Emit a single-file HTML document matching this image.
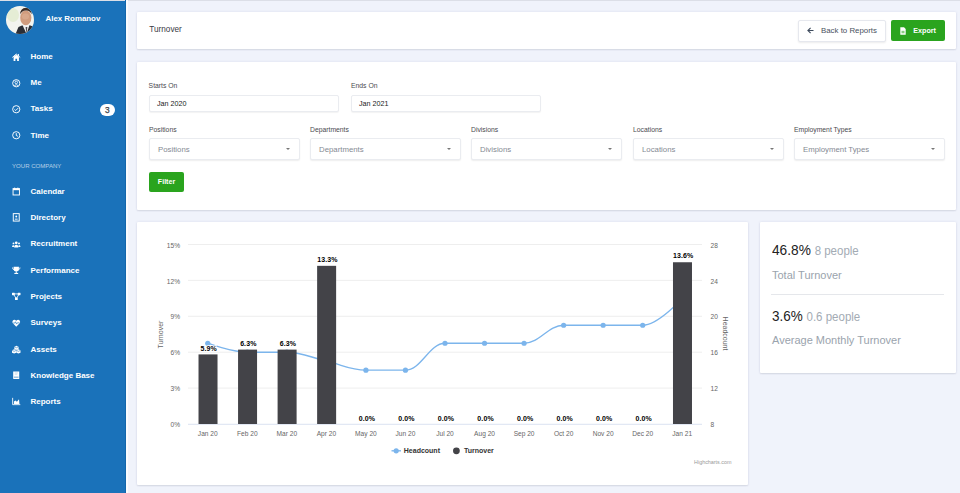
<!DOCTYPE html>
<html><head><meta charset="utf-8"><style>
*{box-sizing:border-box;margin:0;padding:0}
html,body{width:960px;height:493px;overflow:hidden;background:#f0f3fb;font-family:"Liberation Sans",sans-serif}
.abs{position:absolute}
#side{position:absolute;left:0;top:0;width:126px;height:493px;background:#1a72ba}
#topline{position:absolute;left:0;top:0;width:960px;height:1px;background:#dcdfe7}
.ic{position:absolute;left:11.8px;width:8.5px;height:8.5px;overflow:visible}
.mi{position:absolute;left:30.5px;color:#fff;font-weight:bold;font-size:8px;line-height:12px;white-space:nowrap}
.card{position:absolute;background:#fff;border-radius:1px;box-shadow:0 0 2.5px rgba(60,70,120,0.13),0 1px 1.5px rgba(40,45,70,0.1)}
.lbl{position:absolute;font-size:6.8px;color:#4a4a50;line-height:8px;white-space:nowrap}
.inp{position:absolute;height:17px;border:1px solid #eaecf0;border-radius:2px;box-shadow:0 1px 1px rgba(0,0,0,0.05);font-size:7.2px;color:#222;line-height:15px;padding-left:7px;background:#fff}
.sel{position:absolute;width:150.5px;height:22px;border:1px solid #eaecf0;border-radius:2px;box-shadow:0 1px 1.5px rgba(0,0,0,0.07);font-size:7.8px;color:#858a93;line-height:21px;padding-left:8px;background:#fff}
.car{position:absolute;right:9px;top:9px;width:0;height:0;border-left:2px solid transparent;border-right:2px solid transparent;border-top:2.3px solid #777}
.btn{position:absolute;border-radius:2px;white-space:nowrap}
svg text{font-family:"Liberation Sans",sans-serif}
.al{font-size:6.6px;fill:#666}
.at{font-size:7px;fill:#666}
.dl{font-size:7px;letter-spacing:0.1px;font-weight:bold;fill:#000;stroke:#fff;stroke-width:1.5px;paint-order:stroke}
.lg{font-size:7px;font-weight:bold;fill:#333}
.cr{font-size:5.4px;fill:#999}
</style></head><body>
<div id="side">
<svg class="abs" style="left:6px;top:6px" width="28" height="28" viewBox="0 0 28 28"><defs><clipPath id="av"><circle cx="14" cy="14" r="14"/></clipPath></defs><g clip-path="url(#av)">
<rect width="28" height="28" fill="#f3f4ef"/><ellipse cx="7" cy="9" rx="6" ry="7" fill="#e3ecd2" opacity="0.9"/>
<path d="M9.5 28 L12.5 21 Q16 19 19.5 18.8 Q24 19 27 20.5 L28 28Z" fill="#2b2e35"/>
<path d="M16.5 19 L20.5 28 L23.5 19 Z" fill="#f2f2f2"/><path d="M19.6 21 L20.4 28 L21.4 21Z" fill="#4a4a50"/>
<ellipse cx="19.8" cy="11.8" rx="5.6" ry="7.4" fill="#d09c7e"/><ellipse cx="19.5" cy="10.5" rx="3.5" ry="3" fill="#dcae92" opacity="0.7"/>
<path d="M14.2 8.5 Q14 2.2 20 1.8 Q25.8 2.2 25.6 8.5 Q24.8 4.6 20 4.4 Q15.2 4.6 14.2 8.5Z" fill="#3a2b25"/>
</g></svg>
<div class="abs" style="left:45.5px;top:14.2px;color:#fff;font-weight:bold;font-size:7.9px;line-height:10px;white-space:nowrap">Alex Romanov</div>
<svg class="ic" style="top:52.6px" viewBox="0 0 8 8"><path d="M0.3 4.2 L4 1 L7.7 4.2" fill="none" stroke="#fff" stroke-width="0.9"/><path d="M1.5 3.6 V7.5 H3.2 V5.3 H4.8 V7.5 H6.5 V3.6 L4 1.6 Z" fill="#fff"/><rect x="5.6" y="0.9" width="0.9" height="2" fill="#fff"/></svg><div class="mi" style="top:51.3px">Home</div>
<svg class="ic" style="top:78.5px" viewBox="0 0 8 8"><circle cx="4" cy="4" r="3.4" fill="none" stroke="#fff" stroke-width="0.9"/><circle cx="4" cy="3.2" r="1.2" fill="none" stroke="#fff" stroke-width="0.8"/><path d="M2.2 6.2 Q4 4.6 5.8 6.2" fill="none" stroke="#fff" stroke-width="0.8"/></svg><div class="mi" style="top:77.1px">Me</div>
<svg class="ic" style="top:104.8px" viewBox="0 0 8 8"><circle cx="4" cy="4" r="3.4" fill="none" stroke="#fff" stroke-width="0.9"/><path d="M2.3 4.1 L3.5 5.2 L5.8 2.9" fill="none" stroke="#fff" stroke-width="0.9"/></svg><div class="mi" style="top:103.4px">Tasks</div>
<svg class="ic" style="top:131.2px" viewBox="0 0 8 8"><circle cx="4" cy="4" r="3.4" fill="none" stroke="#fff" stroke-width="0.9"/><path d="M4 2 L4 4.2 L5.5 5" fill="none" stroke="#fff" stroke-width="0.9"/></svg><div class="mi" style="top:129.8px">Time</div>
<svg class="ic" style="top:187.1px" viewBox="0 0 8 8"><rect x="1" y="1.5" width="6" height="6" fill="none" stroke="#fff" stroke-width="0.9"/><rect x="1" y="1.5" width="6" height="1.5" fill="#fff"/><path d="M2.5 0.5 V2 M5.5 0.5 V2" stroke="#fff" stroke-width="0.8"/></svg><div class="mi" style="top:185.7px">Calendar</div>
<svg class="ic" style="top:213.3px" viewBox="0 0 8 8"><rect x="1.2" y="0.6" width="5.6" height="7" fill="none" stroke="#fff" stroke-width="0.9"/><circle cx="4" cy="3.3" r="0.9" fill="#fff"/><path d="M2.7 5.8 H5.3" stroke="#fff" stroke-width="0.9"/></svg><div class="mi" style="top:212.0px">Directory</div>
<svg class="ic" style="top:239.7px" viewBox="0 0 8 8"><circle cx="4" cy="2.6" r="1.3" fill="#fff"/><circle cx="1.4" cy="3.2" r="0.9" fill="#fff"/><circle cx="6.6" cy="3.2" r="0.9" fill="#fff"/><path d="M2 7 Q2 4.4 4 4.4 Q6 4.4 6 7 Z M0 6.5 Q0 4.6 1.6 4.6 L2 6.5 Z M8 6.5 Q8 4.6 6.4 4.6 L6 6.5Z" fill="#fff"/></svg><div class="mi" style="top:238.3px">Recruitment</div>
<svg class="ic" style="top:265.9px" viewBox="0 0 8 8"><path d="M1.5 0.8 H6.5 V3 Q6.5 5 4 5.2 Q1.5 5 1.5 3 Z" fill="#fff"/><path d="M0.5 1.3 Q0.3 3.3 2 3.6 M7.5 1.3 Q7.7 3.3 6 3.6" fill="none" stroke="#fff" stroke-width="0.7"/><rect x="3.5" y="5" width="1" height="1.5" fill="#fff"/><rect x="2.2" y="6.5" width="3.6" height="1" fill="#fff"/></svg><div class="mi" style="top:264.6px">Performance</div>
<svg class="ic" style="top:292.2px" viewBox="0 0 8 8"><rect x="0" y="0.6" width="2.6" height="2.4" rx="0.4" fill="#fff"/><rect x="5.4" y="0.6" width="2.6" height="2.4" rx="0.4" fill="#fff"/><rect x="2.8" y="5.2" width="2.6" height="2.4" rx="0.4" fill="#fff"/><path d="M1.3 1.8 H6.7 M1.3 1.8 L4.1 6.4 M6.7 1.8 L4.1 6.4" stroke="#fff" stroke-width="0.8"/></svg><div class="mi" style="top:290.9px">Projects</div>
<svg class="ic" style="top:318.6px" viewBox="0 0 8 8"><path d="M4 7.2 L0.8 4 Q-0.2 2.6 0.8 1.3 Q2.3 0 4 1.7 Q5.7 0 7.2 1.3 Q8.2 2.6 7.2 4 Z" fill="#fff"/><path d="M1 3.8 H2.6 L3.3 2.6 L4.3 4.8 L5 3.6 H7" fill="none" stroke="#1a73bb" stroke-width="0.6"/></svg><div class="mi" style="top:317.2px">Surveys</div>
<svg class="ic" style="top:344.9px" viewBox="0 0 8 8"><path d="M4.2 0.6 L6.2 1.6 L6.2 3.8 L4.2 4.8 L2.2 3.8 L2.2 1.6 Z M2 3.9 L4 5 L4 7.2 L2 8.1 L0 7.2 L0 5 Z M6 3.9 L8 5 L8 7.2 L6 8.1 L4.2 7.2 L4.2 5 Z" fill="#fff"/><path d="M2.2 1.6 L4.2 2.6 L6.2 1.6 M0 5 L2 6 L4 5 M4.2 5 L6 6 L8 5" fill="none" stroke="#1a72ba" stroke-width="0.5"/></svg><div class="mi" style="top:343.5px">Assets</div>
<svg class="ic" style="top:371.1px" viewBox="0 0 8 8"><path d="M1.3 0.4 H6.8 V7.6 H1.8 Q1.1 7.6 1.1 6.8 V0.8 Z" fill="#fff"/><path d="M1.8 5.8 H6.2" stroke="#1a72ba" stroke-width="0.6"/><path d="M2.6 1.8 H5.6 M2.6 3 H5" stroke="#1a72ba" stroke-width="0.4" opacity="0.5"/></svg><div class="mi" style="top:369.8px">Knowledge Base</div>
<svg class="ic" style="top:397.4px" viewBox="0 0 8 8"><path d="M0.6 0.8 V7.2 H7.8" fill="none" stroke="#fff" stroke-width="0.8"/><path d="M1.8 6.6 L1.8 4.2 L3.3 3.2 L4.6 4.4 L6.6 2 L7 6.6 Z" fill="#fff"/></svg><div class="mi" style="top:396.1px">Reports</div>
<div class="abs" style="left:99.8px;top:103.9px;width:15px;height:12.6px;border-radius:6.3px;background:#fff;color:#3a3f48;font-size:8.3px;font-weight:normal;text-align:center;line-height:12.6px;-webkit-text-stroke:0.25px #3a3f48">3</div>
<div class="abs" style="left:12px;top:161.9px;color:rgba(255,255,255,0.68);font-size:6.07px;line-height:8px;white-space:nowrap">YOUR COMPANY</div>
</div>
<div id="topline"></div>
<div class="abs" style="left:125px;top:0;width:1px;height:493px;background:#1266ab"></div>
<div class="abs" style="left:126px;top:0;width:1.5px;height:493px;background:#fafcff"></div>

<div class="card" style="left:137px;top:12px;width:819px;height:37px"></div>
<div class="abs" style="left:149.3px;top:24.8px;font-size:8.2px;color:#3a3a44;line-height:10px">Turnover</div>
<div class="btn" style="left:798px;top:19.5px;width:88px;height:22px;background:#fff;border:1px solid #e6e8ee;box-shadow:0 1px 2px rgba(0,0,0,0.08)">
  <svg class="abs" style="left:8px;top:6px" width="7" height="7" viewBox="0 0 7 7"><path d="M6.5 3.5 H1 M3.6 0.8 L0.9 3.5 L3.6 6.2" fill="none" stroke="#3d4a5c" stroke-width="1.1"/></svg>
  <div class="abs" style="left:22px;top:5px;font-size:7.87px;color:#4a5160;line-height:10px">Back to Reports</div>
</div>
<div class="btn" style="left:891px;top:20px;width:54px;height:21px;background:#2aa41e">
  <svg class="abs" style="left:8.5px;top:6.7px" width="6" height="8" viewBox="0 0 6 8"><path d="M0.3 0.3 H4 L5.7 2 V7.7 H0.3 Z" fill="#fff"/><rect x="1.5" y="3.8" width="3" height="2.5" fill="#2aa41e" opacity="0.55"/></svg>
  <div class="abs" style="left:22.3px;top:5.5px;font-size:7.17px;color:#fff;font-weight:bold;line-height:10px">Export</div>
</div>

<div class="card" style="left:137px;top:61.5px;width:819px;height:148.5px"></div>
<div class="lbl" style="left:148.6px;top:81.5px">Starts On</div>
<div class="inp" style="left:149px;top:95px;width:190px">Jan 2020</div>
<div class="lbl" style="left:351px;top:81.5px">Ends On</div>
<div class="inp" style="left:351px;top:95px;width:190px">Jan 2021</div>
<div class="lbl" style="left:149px;top:126px">Positions</div>
<div class="sel" style="left:149px;top:138px"><span>Positions</span><i class="car"></i></div>
<div class="lbl" style="left:310px;top:126px">Departments</div>
<div class="sel" style="left:310px;top:138px"><span>Departments</span><i class="car"></i></div>
<div class="lbl" style="left:471px;top:126px">Divisions</div>
<div class="sel" style="left:471px;top:138px"><span>Divisions</span><i class="car"></i></div>
<div class="lbl" style="left:633px;top:126px">Locations</div>
<div class="sel" style="left:633px;top:138px"><span>Locations</span><i class="car"></i></div>
<div class="lbl" style="left:794px;top:126px">Employment Types</div>
<div class="sel" style="left:794px;top:138px"><span>Employment Types</span><i class="car"></i></div>
<div class="btn" style="left:149px;top:172px;width:35px;height:20px;background:#2aa41e;color:#fff;font-weight:bold;font-size:7.08px;line-height:20px;text-align:center">Filter</div>

<div class="card" style="left:137px;top:221.5px;width:611px;height:263.5px"></div>
<div class="card" style="left:759.5px;top:221.5px;width:196.5px;height:151px"></div>
<div class="abs" style="left:772px;top:242.8px;font-size:13.7px;color:#222;line-height:16px;white-space:nowrap;transform:scaleY(1.12);transform-origin:0 11px">46.8% <span style="font-size:11.5px;color:#a3abb4">8 people</span></div>
<div class="abs" style="left:772px;top:268.5px;font-size:11px;color:#9aa3ad;line-height:13px;white-space:nowrap">Total Turnover</div>
<div class="abs" style="left:771px;top:294px;width:173px;height:1px;background:#e5e7eb"></div>
<div class="abs" style="left:772px;top:309px;font-size:13.5px;color:#222;line-height:16px;white-space:nowrap;transform:scaleY(1.12);transform-origin:0 11px">3.6% <span style="font-size:11.5px;color:#a3abb4">0.6 people</span></div>
<div class="abs" style="left:772px;top:334px;font-size:11px;color:#9aa3ad;line-height:13px;white-space:nowrap">Average Monthly Turnover</div>

<svg class="abs" style="left:0;top:0" width="960" height="493" viewBox="0 0 960 493">
<line x1="188" x2="702" y1="244.50" y2="244.50" stroke="#e6e6e6" stroke-width="0.7"/>
<line x1="188" x2="702" y1="280.40" y2="280.40" stroke="#e6e6e6" stroke-width="0.7"/>
<line x1="188" x2="702" y1="316.30" y2="316.30" stroke="#e6e6e6" stroke-width="0.7"/>
<line x1="188" x2="702" y1="352.20" y2="352.20" stroke="#e6e6e6" stroke-width="0.7"/>
<line x1="188" x2="702" y1="388.10" y2="388.10" stroke="#e6e6e6" stroke-width="0.7"/>
<text x="180" y="247.60" text-anchor="end" class="al">15%</text>
<text x="180" y="283.50" text-anchor="end" class="al">12%</text>
<text x="180" y="319.40" text-anchor="end" class="al">9%</text>
<text x="180" y="355.30" text-anchor="end" class="al">6%</text>
<text x="180" y="391.20" text-anchor="end" class="al">3%</text>
<text x="180" y="427.10" text-anchor="end" class="al">0%</text>
<text x="710.5" y="247.60" class="al">28</text>
<text x="710.5" y="283.50" class="al">24</text>
<text x="710.5" y="319.40" class="al">20</text>
<text x="710.5" y="355.30" class="al">16</text>
<text x="710.5" y="391.20" class="al">12</text>
<text x="710.5" y="427.10" class="al">8</text>
<line x1="188" x2="702" y1="424.3" y2="424.3" stroke="#ccd6eb" stroke-width="0.7"/>
<text x="207.77" y="435.50" text-anchor="middle" class="al">Jan 20</text>
<text x="247.31" y="435.50" text-anchor="middle" class="al">Feb 20</text>
<text x="286.85" y="435.50" text-anchor="middle" class="al">Mar 20</text>
<text x="326.38" y="435.50" text-anchor="middle" class="al">Apr 20</text>
<text x="365.92" y="435.50" text-anchor="middle" class="al">May 20</text>
<text x="405.46" y="435.50" text-anchor="middle" class="al">Jun 20</text>
<text x="445.00" y="435.50" text-anchor="middle" class="al">Jul 20</text>
<text x="484.54" y="435.50" text-anchor="middle" class="al">Aug 20</text>
<text x="524.08" y="435.50" text-anchor="middle" class="al">Sep 20</text>
<text x="563.62" y="435.50" text-anchor="middle" class="al">Oct 20</text>
<text x="603.15" y="435.50" text-anchor="middle" class="al">Nov 20</text>
<text x="642.69" y="435.50" text-anchor="middle" class="al">Dec 20</text>
<text x="682.23" y="435.50" text-anchor="middle" class="al">Jan 21</text>
<text transform="translate(163,334.5) rotate(-90)" text-anchor="middle" class="at">Turnover</text>
<text transform="translate(722.5,333.5) rotate(90)" text-anchor="middle" class="at">Headcount</text>
<path d="M207.77 343.23 C207.77 343.23 231.49 352.20 247.31 352.20 C263.12 352.20 271.03 352.20 286.85 352.20 C302.66 352.20 310.57 357.59 326.38 361.18 C342.20 364.76 350.11 370.15 365.92 370.15 C381.74 370.15 389.65 370.15 405.46 370.15 C421.28 370.15 429.18 343.23 445.00 343.23 C460.82 343.23 468.72 343.23 484.54 343.23 C500.35 343.23 508.26 343.23 524.08 343.23 C539.89 343.23 547.80 325.27 563.62 325.27 C579.43 325.27 587.34 325.27 603.15 325.27 C618.97 325.27 626.88 325.27 642.69 325.27 C658.51 325.27 682.23 298.35 682.23 298.35" fill="none" stroke="#7cb5ec" stroke-width="1.35"/>
<circle cx="207.77" cy="343.23" r="2.6" fill="#7cb5ec"/>
<circle cx="247.31" cy="352.20" r="2.6" fill="#7cb5ec"/>
<circle cx="286.85" cy="352.20" r="2.6" fill="#7cb5ec"/>
<circle cx="326.38" cy="361.18" r="2.6" fill="#7cb5ec"/>
<circle cx="365.92" cy="370.15" r="2.6" fill="#7cb5ec"/>
<circle cx="405.46" cy="370.15" r="2.6" fill="#7cb5ec"/>
<circle cx="445.00" cy="343.23" r="2.6" fill="#7cb5ec"/>
<circle cx="484.54" cy="343.23" r="2.6" fill="#7cb5ec"/>
<circle cx="524.08" cy="343.23" r="2.6" fill="#7cb5ec"/>
<circle cx="563.62" cy="325.27" r="2.6" fill="#7cb5ec"/>
<circle cx="603.15" cy="325.27" r="2.6" fill="#7cb5ec"/>
<circle cx="642.69" cy="325.27" r="2.6" fill="#7cb5ec"/>
<circle cx="682.23" cy="298.35" r="2.6" fill="#7cb5ec"/>
<rect x="198.52" y="354.40" width="19" height="69.60" fill="#434348"/>
<rect x="238.06" y="349.61" width="19" height="74.39" fill="#434348"/>
<rect x="277.60" y="349.61" width="19" height="74.39" fill="#434348"/>
<rect x="317.13" y="265.84" width="19" height="158.16" fill="#434348"/>
<rect x="672.98" y="262.25" width="19" height="161.75" fill="#434348"/>
<text x="208.77" y="350.60" text-anchor="middle" class="dl">5.9%</text>
<text x="248.31" y="345.81" text-anchor="middle" class="dl">6.3%</text>
<text x="287.85" y="345.81" text-anchor="middle" class="dl">6.3%</text>
<text x="327.38" y="262.04" text-anchor="middle" class="dl">13.3%</text>
<text x="366.92" y="421.20" text-anchor="middle" class="dl">0.0%</text>
<text x="406.46" y="421.20" text-anchor="middle" class="dl">0.0%</text>
<text x="446.00" y="421.20" text-anchor="middle" class="dl">0.0%</text>
<text x="485.54" y="421.20" text-anchor="middle" class="dl">0.0%</text>
<text x="525.08" y="421.20" text-anchor="middle" class="dl">0.0%</text>
<text x="564.62" y="421.20" text-anchor="middle" class="dl">0.0%</text>
<text x="604.15" y="421.20" text-anchor="middle" class="dl">0.0%</text>
<text x="643.69" y="421.20" text-anchor="middle" class="dl">0.0%</text>
<text x="683.23" y="258.45" text-anchor="middle" class="dl">13.6%</text>
<line x1="391.5" x2="401" y1="450.8" y2="450.8" stroke="#7cb5ec" stroke-width="1.35"/>
<circle cx="396.2" cy="450.8" r="2.6" fill="#7cb5ec"/>
<text x="403.8" y="453.3" class="lg">Headcount</text>
<circle cx="456.4" cy="450.8" r="3.4" fill="#434348"/>
<text x="464" y="453.3" class="lg">Turnover</text>
<text x="731.5" y="463.6" text-anchor="end" class="cr">Highcharts.com</text>
</svg>
</body></html>
